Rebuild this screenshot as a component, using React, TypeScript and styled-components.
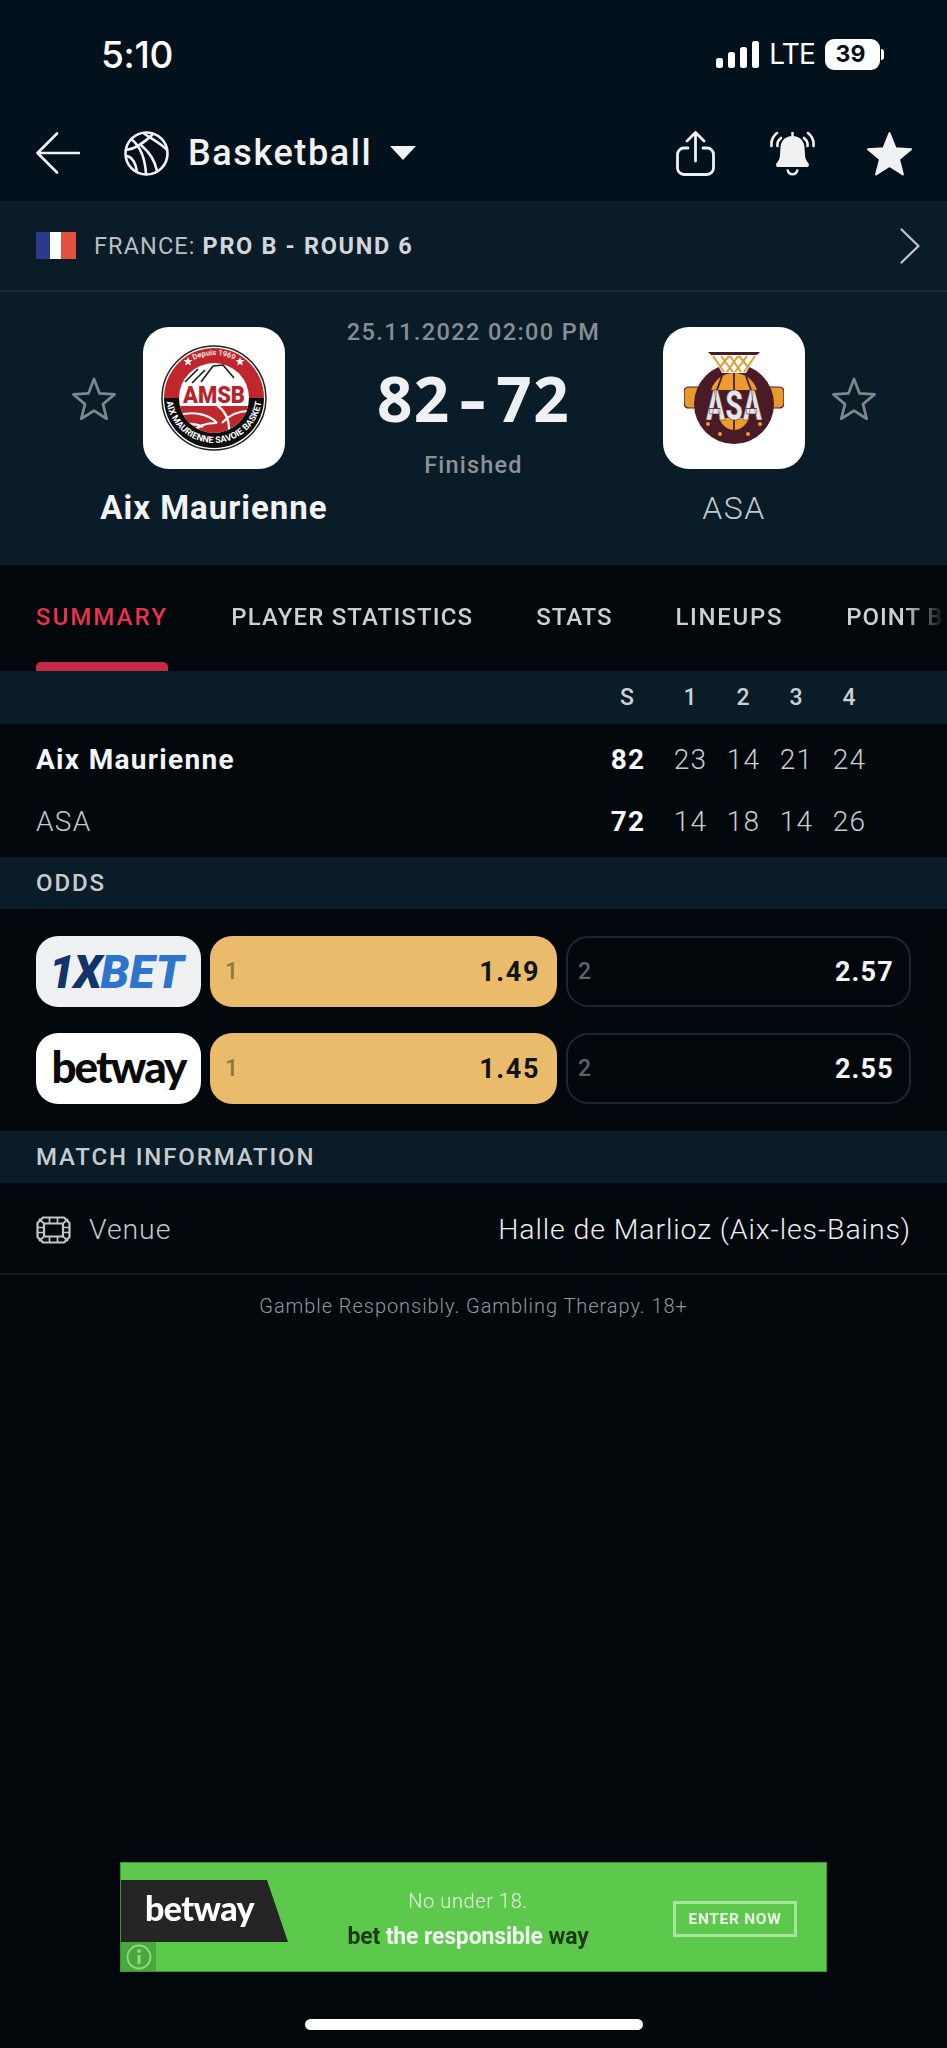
import React from "react";
import styled, { createGlobalStyle } from "styled-components";

const Global = createGlobalStyle`
  html, body { margin: 0; padding: 0; background: #02070c; }
  * { box-sizing: border-box; }
  #root { width: 947px; height: 2048px; overflow: hidden; }
`;

const Page = styled.div`
  width: 947px;
  height: 2048px;
  display: flex;
  flex-direction: column;
  background: #02070c;
  font-family: Roboto, "Liberation Sans", sans-serif;
  color: #f1f2f3;
`;
const TopArea = styled.header`
  height: 201px;
  background: #03111c;
  display: flex;
  flex-direction: column;
`;
const StatusBar = styled.div`
  height: 108px;
  display: flex;
  align-items: center;
  justify-content: space-between;
  padding: 0 63px 0 101px;
`;
const Clock = styled.span`
  font: 500 37px Inter, sans-serif;
  letter-spacing: -0.3px;
  color: #fff;
`;
const StatusRight = styled.div`
  display: flex;
  align-items: center;
  gap: 10px;
`;
const Lte = styled.span`
  font: 400 28px Inter, sans-serif;
  color: #fff;
  letter-spacing: -0.8px;
`;
const Battery = styled.span`
  width: 55px;
  height: 31px;
  border-radius: 9px;
  background: #fff;
  color: #03111c;
  font: 700 23px/31px Inter, sans-serif;
  text-align: center;
  padding-right: 4px;
  display: block;
`;
const BatteryNub = styled.span`
  width: 3px;
  height: 11px;
  background: #fff;
  border-radius: 0 3px 3px 0;
  margin-left: -9px;
`;
const NavBar = styled.nav`
  flex: 1;
  display: flex;
  align-items: center;
  padding: 0 35px 3px 36px;
`;
const NavBack = styled.span`
  display: flex;
  margin-right: 44px;
`;
const NavTitle = styled.span`
  font-size: 36px;
  font-weight: 500;
  letter-spacing: 1.6px;
  margin: 0 18px 0 19px;
`;
const NavActions = styled.div`
  margin-left: auto;
  display: flex;
  align-items: center;
  gap: 55px;
`;
const NavStar = styled.span`
  display: flex;
  margin-left: -3px;
`;
const LeagueBar = styled.div`
  height: 91px;
  background: #0a1c28;
  border-bottom: 2px solid #162a37;
  display: flex;
  align-items: center;
  padding: 0 27px 0 36px;
  font-size: 23.5px;
  letter-spacing: 1.1px;
  color: #b9bec2;
`;
const Flag = styled.span`
  width: 40px;
  height: 27px;
  margin-right: 18px;
  background: linear-gradient(90deg, #2c3a8e 0 36%, #fff 36% 62%, #e2513f 62%);
`;
const LeagueStrong = styled.b`
  font-weight: 700;
  color: #d3d6d9;
  margin-left: 7px;
  letter-spacing: 1.65px;
`;
const ChevronWrap = styled.span`
  margin-left: auto;
  display: flex;
`;
const MatchPanel = styled.section`
  height: 273px;
  background: #0a1c28;
  padding: 35px 0 0 72px;
  display: grid;
  grid-template-columns: 284px 236px 284px;
  align-items: start;
`;
const Team = styled.div`
  display: grid;
  grid-template-columns: 44px 1fr 44px;
  justify-items: center;
  align-items: center;
  row-gap: 21px;
`;
const TeamLogo = styled.div`
  grid-column: 2;
  width: 142px;
  height: 142px;
  border-radius: 26px;
  background: #fff;
  display: flex;
  align-items: center;
  justify-content: center;
`;
const TeamName = styled.div<{ $bold?: boolean }>`
  grid-column: 1 / -1;
  font-size: ${(p) => (p.$bold ? "33px" : "32px")};
  line-height: 36px;
  letter-spacing: ${(p) => (p.$bold ? "1px" : "1.5px")};
  font-weight: ${(p) => (p.$bold ? 700 : 300)};
  color: ${(p) => (p.$bold ? "#f2f3f4" : "#c3c7ca")};
`;
const Center = styled.div`
  margin-top: -10px;
  margin-left: -1px;
  display: flex;
  flex-direction: column;
  align-items: center;
`;
const DateText = styled.div`
  font-size: 23.5px;
  line-height: 30px;
  font-weight: 500;
  letter-spacing: 1.4px;
  color: #878e93;
  white-space: nowrap;
`;
const Score = styled.div`
  font-family: "Noto Sans", Roboto, sans-serif;
  font-size: 62px;
  line-height: 72px;
  font-weight: 700;
  letter-spacing: 1.5px;
  color: #eff0f1;
  margin-top: 15px;
  display: flex;
  gap: 12px;
`;
const ScoreDash = styled.span`
  display: block;
  transform: scaleX(1.35);
`;
const Status = styled.div`
  font-size: 23.5px;
  line-height: 30px;
  font-weight: 500;
  letter-spacing: 1.2px;
  color: #8c9296;
  margin-top: 16px;
`;
const Tabs = styled.div`
  height: 106px;
  padding: 0 0 0 36px;
  display: flex;
  gap: 63px;
  overflow: hidden;
  -webkit-mask-image: linear-gradient(90deg, #000 905px, transparent 945px);
  mask-image: linear-gradient(90deg, #000 905px, transparent 945px);
`;
const Tab = styled.div<{ $active?: boolean; $spacing: number }>`
  height: 106px;
  padding-top: 37px;
  display: flex;
  flex-direction: column;
  justify-content: space-between;
  font-size: 24px;
  line-height: 30px;
  font-weight: 500;
  letter-spacing: ${(p) => p.$spacing}px;
  white-space: nowrap;
  flex: none;
  color: ${(p) => (p.$active ? "#ee2f50" : "#ccd0d3")};
`;
const TabLine = styled.div<{ $active?: boolean }>`
  height: 9px;
  border-radius: 5px 5px 0 0;
  background: ${(p) => (p.$active ? "#c42a45" : "transparent")};
`;
const ScoreHead = styled.div`
  height: 53px;
  background: #0a1c28;
  display: grid;
  grid-template-columns: 1fr 63px repeat(4, 53px);
  padding: 0 71px 0 36px;
  align-items: center;
  font-size: 23px;
  font-weight: 500;
  color: #ccd0d3;
  letter-spacing: 1px;
`;
const ScoreRow = styled.div`
  height: 62px;
  display: grid;
  grid-template-columns: 1fr 63px repeat(4, 53px);
  padding: 0 71px 0 36px;
  align-items: center;
  font-size: 28px;
  letter-spacing: 1.3px;
  font-weight: 300;
  color: #c9cdd0;
`;
const ScoreRows = styled.div`
  height: 133px;
  padding-top: 4px;
`;
const HeadCell = styled.span<{ $main?: boolean }>`
  text-align: center;
  padding-right: ${(p) => (p.$main ? "10px" : "0")};
`;
const RowName = styled.span<{ $bold?: boolean }>`
  font-weight: ${(p) => (p.$bold ? 700 : 300)};
  color: ${(p) => (p.$bold ? "#f4f5f6" : "#c3c7ca")};
`;
const Cell = styled.span<{ $main?: boolean }>`
  text-align: center;
  padding-right: ${(p) => (p.$main ? "9px" : "0")};
  font-weight: ${(p) => (p.$main ? 700 : 300)};
  color: ${(p) => (p.$main ? "#f6f7f8" : "#c9cdd0")};
`;
const SectionHead = styled.div`
  height: 52px;
  background: #0a1c28;
  display: flex;
  align-items: center;
  padding-left: 36px;
  font-size: 24px;
  font-weight: 500;
  letter-spacing: 1.85px;
  color: #c7cbce;
`;
const OddsList = styled.div`
  height: 222px;
  padding: 27px 36px 0;
  display: flex;
  flex-direction: column;
  gap: 26px;
`;
const OddsRow = styled.div`
  height: 71px;
  display: grid;
  grid-template-columns: 165px 347px 345px;
  column-gap: 9px;
`;
const Bookmaker = styled.div<{ $tint?: boolean }>`
  border-radius: 22px;
  background: ${(p) => (p.$tint ? "#eff0f2" : "#fff")};
  display: flex;
  align-items: center;
  justify-content: center;
`;
const OneXLogo = styled.span`
  font: italic 900 46px/1 Roboto, sans-serif;
  letter-spacing: 0.4px;
  color: #2d74cb;
  margin-left: -4px;
`;
const OneXDark = styled.span`
  color: #123468;
  letter-spacing: -1.5px;
`;
const BetwayLogo = styled.span`
  font: 900 44px/1 Lato, sans-serif;
  letter-spacing: -1.9px;
  color: #0a0a0a;
  margin-top: -6px;
`;
const Odd = styled.div<{ $on?: boolean }>`
  border-radius: 22px;
  background: ${(p) => (p.$on ? "#e9bb6a" : "transparent")};
  border: ${(p) => (p.$on ? "none" : "2px solid #1a2833")};
  display: flex;
  align-items: center;
  justify-content: space-between;
  padding: ${(p) => (p.$on ? "0 17px 0 15px" : "0 15px 0 10px")};
  font-size: 27px;
`;
const OddLabel = styled.span<{ $on?: boolean }>`
  font-size: 23px;
  font-weight: 500;
  color: ${(p) => (p.$on ? "#8d7546" : "#5c6368")};
`;
const OddValue = styled.span<{ $on?: boolean }>`
  font-weight: 700;
  letter-spacing: ${(p) => (p.$on ? "1.6px" : "1.2px")};
  color: ${(p) => (p.$on ? "#0e151b" : "#f6f7f8")};
`;
const InfoRow = styled.div`
  height: 92px;
  border-bottom: 2px solid #141c23;
  padding: 3px 36px 0;
  display: flex;
  align-items: center;
  font-size: 28.5px;
  font-weight: 300;
  letter-spacing: 0.9px;
`;
const InfoLabel = styled.span`
  color: #c3c7ca;
  margin-left: 18px;
`;
const InfoValue = styled.span`
  margin-left: auto;
  color: #eceeef;
`;
const Footer = styled.div`
  text-align: center;
  font-size: 20px;
  line-height: 24px;
  letter-spacing: 0.95px;
  font-weight: 300;
  color: #92979b;
  padding-top: 19px;
`;
const Ad = styled.aside`
  margin: auto 120px 0 120px;
  height: 110px;
  width: 707px;
  background: #5cc94c;
  border: 1px solid #3f9435;
  display: grid;
  grid-template-columns: 167px 1fr 124px;
  color: #e9f8e5;
  overflow: hidden;
  filter: blur(0.5px);
`;
const AdBrandCol = styled.div`
  display: flex;
  flex-direction: column;
  padding-top: 17px;
`;
const AdBrand = styled.div`
  height: 62px;
  width: 167px;
  background: #252525;
  clip-path: polygon(0 0, 146px 0, 100% 100%, 0 100%);
  font: 900 34px/56px Lato, sans-serif;
  letter-spacing: -0.6px;
  color: #fff;
  padding-left: 24px;
`;
const AdInfo = styled.div`
  width: 35px;
  flex: 1;
  background: #4aa73e;
  display: flex;
  align-items: center;
  justify-content: center;
`;
const AdCenter = styled.div`
  text-align: center;
  padding: 26px 54px 0 0;
`;
const AdLine = styled.div`
  font-size: 20px;
  line-height: 24px;
  font-weight: 300;
  letter-spacing: 0.6px;
`;
const AdTag = styled.div`
  font-size: 23px;
  line-height: 28px;
  font-weight: 700;
  margin-top: 10px;
  color: #f2fbef;
  white-space: nowrap;
  letter-spacing: -0.15px;
`;
const AdDark = styled.span`
  color: #1c3a18;
`;
const AdCol = styled.div`
  padding-top: 38px;
  margin-left: -29px;
  margin-right: 29px;
`;
const AdButton = styled.div`
  height: 36px;
  width: 124px;
  border: 3px solid #a7e59c;
  font-size: 15.5px;
  line-height: 30px;
  font-weight: 700;
  letter-spacing: 0.7px;
  text-align: center;
  color: #eef9eb;
  white-space: nowrap;
`;
const HomeArea = styled.div`
  height: 76px;
  padding-top: 47px;
  display: flex;
  justify-content: center;
`;
const HomeBar = styled.div`
  width: 338px;
  height: 11px;
  border-radius: 6px;
  background: #fff;
`;

const Signal = () => (
  <svg width="43" height="27" viewBox="0 0 43 27" fill="#fff">
    <rect x="0" y="17" width="7" height="10" rx="2.5" />
    <rect x="12" y="11" width="7" height="16" rx="2.5" />
    <rect x="24" y="6" width="7" height="21" rx="2.5" />
    <rect x="36" y="0" width="7" height="27" rx="2.5" />
  </svg>
);
const BackArrow = () => (
  <svg width="44" height="42" viewBox="0 0 44 42" fill="none" stroke="#f2f3f4" strokeWidth="2.6" strokeLinecap="round" strokeLinejoin="round">
    <path d="M43 21H2M21 1.5 1.5 21 21 40.5" />
  </svg>
);
const Ball = () => (
  <svg width="45" height="45" viewBox="0 0 45 45" fill="none" stroke="#f2f3f4" strokeWidth="2.6" strokeLinecap="round">
    <circle cx="22.5" cy="22.5" r="21" />
    <path d="M7 8c8 6 14 18 15 35M29 3C22 10 12 18 2 19M20 2.500C28 8 38 13 43 19M3 25c5 1 9 7 10 16M18 15c7 6 13 15 15 25" />
  </svg>
);
const Caret = () => (
  <svg width="26" height="14" viewBox="0 0 26 14" fill="#f2f3f4">
    <path d="M0 0h26L13 14z" />
  </svg>
);
const Share = () => (
  <svg width="39" height="45" viewBox="0 0 39 45" fill="none" stroke="#f0f1f2" strokeWidth="2.8" strokeLinecap="round" strokeLinejoin="round">
    <path d="M19.5 30V2M11 10l8.500-8.500L28 10M12 17H8a6.500 6.500 0 0 0-6.500 6.500V37A6.500 6.500 0 0 0 8 43.500h23a6.500 6.500 0 0 0 6.500-6.500V23.500A6.500 6.500 0 0 0 31 17h-4" />
  </svg>
);
const Bell = () => (
  <svg width="45" height="45" viewBox="0 0 45 45" fill="none">
    <path fill="#f0f1f2" d="M21.300 1h2.400v4h-2.400zM22.500 5C15 5 11 10 10.500 16L10 24C9.700 28 8.500 30 6.800 32C5.500 33.500 6 36 8 36H37C39 36 39.500 33.500 38.200 32C36.500 30 35.300 28 35 24L34.500 16C34 10 30 5 22.500 5Z" />
    <path stroke="#f0f1f2" strokeWidth="2.4" d="M17.500 38.500C18 41.500 20 43.300 22.500 43.300S27 41.500 27.500 38.500" />
    <path stroke="#f0f1f2" strokeWidth="2.600" strokeLinecap="round" d="M7 2C3 5 1 10 1.500 15M11 7C8.500 9 7 12 7.500 15M38 2C42 5 44 10 43.500 15M34 7C36.500 9 38 12 37.500 15" />
  </svg>
);
const StarFull = () => (
  <svg width="45" height="45" viewBox="0 0 45 45" fill="#f0f1f2" stroke="#f0f1f2" strokeWidth="2" strokeLinejoin="round">
    <path d="M22.500 2l6 15.200 15.500 1.100-12 10 3.900 15.200-13.400-8.500-13.400 8.500L13 28.300 1 18.300l15.500-1.100z" />
  </svg>
);
const Chevron = () => (
  <svg width="20" height="36" viewBox="0 0 20 36" fill="none" stroke="#c3c7ca" strokeWidth="2.2" strokeLinecap="round" strokeLinejoin="round">
    <path d="M1.500 1.500 18.500 18 1.500 34.500" />
  </svg>
);
const StarOutline = () => (
  <svg width="44" height="44" viewBox="0 0 45 45" fill="none" stroke="#7f878c" strokeWidth="2.800" strokeLinejoin="round">
    <path d="M22.500 3l5.700 14.800 15.300 1.100-11.800 9.900 3.800 14.900-13-8.300-13 8.300 3.800-14.900L1.500 18.900l15.300-1.100z" />
  </svg>
);
const Stadium = () => (
  <svg width="35" height="28" viewBox="0 0 35 28" fill="none" stroke="#c3c7ca" strokeWidth="2.200" strokeLinejoin="round">
    <path d="M7 1.500h21l5.500 5.500v14L28 26.500H7L1.500 21V7z" />
    <rect x="8" y="7.500" width="19" height="13" rx="1.500" />
    <path d="M3 3l5 4.500M32 3l-5 4.500M3 25l5-4.500M32 25l-5-4.500M13.500 1.500v6M21.500 1.500v6M13.500 20.500v6M21.500 20.500v6M1.500 11.500H8M1.500 16.500H8M27 11.500h6.500M27 16.500h6.500" strokeWidth="1.700" />
  </svg>
);
const AmsbLogo = () => (
  <svg width="106" height="106" viewBox="0 0 106 106">
    <defs>
      <path id="ringTop" d="M10 53a43 43 0 0 1 86 0" />
      <path id="ringBottom" d="M5 50a48 48 0 0 0 96 0" />
      <clipPath id="innerDisc"><circle cx="53" cy="53" r="35" /></clipPath>
    </defs>
    <circle cx="53" cy="53" r="52" fill="#fff" stroke="#222" strokeWidth="1.500" />
    <path d="M3 53a50 50 0 0 1 100 0z" fill="#c0272d" />
    <path d="M3 53a50 50 0 0 0 100 0z" fill="#0d0d0d" />
    <circle cx="53" cy="53" r="35" fill="#fff" />
    <text fontFamily="Roboto, sans-serif" fontSize="7.500" fontWeight="500" fill="#fff">
      <textPath href="#ringTop" startOffset="50%" textAnchor="middle">Depuis 1969</textPath>
    </text>
    <text fontFamily="Roboto, sans-serif" fontSize="9" fontWeight="700" fill="#fff">
      <textPath href="#ringBottom" startOffset="50%" textAnchor="middle">AIX MAURIENNE SAVOIE BASKET</textPath>
    </text>
    <path d="M22 38 35 26l6 2 10-7 11-1 10 12 12 8z" fill="#fff" />
    <path d="M24 37 37 24M31 38 44 25M40 37 52 21M52 21l10-1 11 13" fill="none" stroke="#1a1a1a" strokeWidth="1.600" />
    <path d="m27 12 1.300 3 3.200.2-2.500 2 .8 3.200-2.800-1.700-2.800 1.700.8-3.200-2.500-2 3.200-.2z" fill="#fff" />
    <path d="m79 12 1.300 3 3.200.2-2.500 2 .8 3.200-2.800-1.700-2.800 1.700.8-3.200-2.500-2 3.200-.2z" fill="#fff" />
    <text x="53" y="58" textAnchor="middle" fontFamily="Roboto, sans-serif" fontWeight="900" fontSize="24" fill="#b8242a" textLength="62" lengthAdjust="spacingAndGlyphs">AMSB</text>
    <g clipPath="url(#innerDisc)">
      <path d="M18 61h70v30H18z" fill="#c0272d" />
      <path d="M18 70c14-4 30-1 38 8M56 60c8 6 13 15 12 28M88 66c-10 0-20 4-27 12M30 88c7-7 14-10 26-10M18 80c9-2 18-1 24 2" stroke="#fff" strokeWidth="2.200" fill="none" />
    </g>
  </svg>
);
const AsaLogo = () => (
  <svg width="100" height="92" viewBox="0 0 100 92">
    <path d="M0 40c0-3 2-5 5-5h11v21H5c-3 0-5-2-5-5zM100 40c0-3-2-5-5-5H84v21h11c3 0 5-2 5-5z" fill="#e69a2c" stroke="#4a1a26" strokeWidth="1.200" />
    <circle cx="50" cy="52" r="40" fill="#4a1a26" />
    <path d="M24 0h52l-3 3H27z" fill="#4a1a26" />
    <path d="M28 3h44L62 21H38z" fill="#fff" />
    <path d="M29 4l11 16M37 4l12 16M46 4l11 16M55 4l9 11M71 4L60 20M63 4L51 20M54 4 43 20M45 4 36 15" stroke="#e39a30" strokeWidth="2" fill="none" />
    <path d="M27 38c3-10 12-17 23-17s20 7 23 17z" fill="#eb9c2c" />
    <path d="M50 21v17M38 24l-5 14M62 24l5 14" stroke="#4a1a26" strokeWidth="1.800" />
    <path d="M35 66h30c-3 8-9 12-15 12s-12-4-15-12z" fill="#eb9c2c" />
    <path d="M50 66v12" stroke="#4a1a26" strokeWidth="1.800" />
    <circle cx="24" cy="72" r="2" fill="#eb9c2c" />
    <circle cx="76" cy="72" r="2" fill="#eb9c2c" />
    <circle cx="36" cy="82" r="2" fill="#eb9c2c" />
    <circle cx="64" cy="82" r="2" fill="#eb9c2c" />
    <text x="50" y="68" textAnchor="middle" fontFamily="Roboto, sans-serif" fontWeight="900" fontSize="42" fill="#e6e6e8" stroke="#4a1a26" strokeWidth=".6" textLength="56" lengthAdjust="spacingAndGlyphs">ASA</text>
  </svg>
);
const InfoIcon = () => (
  <svg width="26" height="26" viewBox="0 0 26 26" fill="none" stroke="#8edc80" strokeWidth="1.800">
    <circle cx="13" cy="13" r="11.500" />
    <path d="M13 11v9" strokeWidth="3" />
    <circle cx="13" cy="7" r="1" />
  </svg>
);

const tabs = [
  { label: "SUMMARY", spacing: 2.1 },
  { label: "PLAYER STATISTICS", spacing: 1.15 },
  { label: "STATS", spacing: 0.95 },
  { label: "LINEUPS", spacing: 1.7 },
  { label: "POINT BY POINT", spacing: 0.95 },
];

const rows = [
  { name: "Aix Maurienne", bold: true, vals: ["82", "23", "14", "21", "24"] },
  { name: "ASA", bold: false, vals: ["72", "14", "18", "14", "26"] },
];

export default function App() {
  return (
    <Page>
      <Global />
      <TopArea>
        <StatusBar>
          <Clock>5:10</Clock>
          <StatusRight>
            <Signal />
            <Lte>LTE</Lte>
            <Battery>39</Battery>
            <BatteryNub />
          </StatusRight>
        </StatusBar>
        <NavBar>
          <NavBack><BackArrow /></NavBack>
          <Ball />
          <NavTitle>Basketball</NavTitle>
          <Caret />
          <NavActions>
            <Share />
            <Bell />
            <NavStar><StarFull /></NavStar>
          </NavActions>
        </NavBar>
      </TopArea>
      <LeagueBar>
        <Flag />
        FRANCE:<LeagueStrong>PRO B - ROUND 6</LeagueStrong>
        <ChevronWrap><Chevron /></ChevronWrap>
      </LeagueBar>
      <MatchPanel>
        <Team>
          <StarOutline />
          <TeamLogo><AmsbLogo /></TeamLogo>
          <TeamName $bold>Aix Maurienne</TeamName>
        </Team>
        <Center>
          <DateText>25.11.2022 02:00 PM</DateText>
          <Score><span>82</span><ScoreDash>-</ScoreDash><span>72</span></Score>
          <Status>Finished</Status>
        </Center>
        <Team>
          <TeamLogo><AsaLogo /></TeamLogo>
          <StarOutline />
          <TeamName>ASA</TeamName>
        </Team>
      </MatchPanel>
      <Tabs>
        {tabs.map((t, i) => (
          <Tab key={t.label} $active={i === 0} $spacing={t.spacing}>
            {t.label}
            <TabLine $active={i === 0} />
          </Tab>
        ))}
      </Tabs>
      <ScoreHead>
        <span />
        <HeadCell $main>S</HeadCell>
        <HeadCell>1</HeadCell>
        <HeadCell>2</HeadCell>
        <HeadCell>3</HeadCell>
        <HeadCell>4</HeadCell>
      </ScoreHead>
      <ScoreRows>
        {rows.map((r) => (
          <ScoreRow key={r.name}>
            <RowName $bold={r.bold}>{r.name}</RowName>
            {r.vals.map((v, i) => (
              <Cell key={i} $main={i === 0}>{v}</Cell>
            ))}
          </ScoreRow>
        ))}
      </ScoreRows>
      <SectionHead>ODDS</SectionHead>
      <OddsList>
        <OddsRow>
          <Bookmaker $tint><OneXLogo><OneXDark>1X</OneXDark>BET</OneXLogo></Bookmaker>
          <Odd $on><OddLabel $on>1</OddLabel><OddValue $on>1.49</OddValue></Odd>
          <Odd><OddLabel>2</OddLabel><OddValue>2.57</OddValue></Odd>
        </OddsRow>
        <OddsRow>
          <Bookmaker><BetwayLogo>betway</BetwayLogo></Bookmaker>
          <Odd $on><OddLabel $on>1</OddLabel><OddValue $on>1.45</OddValue></Odd>
          <Odd><OddLabel>2</OddLabel><OddValue>2.55</OddValue></Odd>
        </OddsRow>
      </OddsList>
      <SectionHead>MATCH INFORMATION</SectionHead>
      <InfoRow>
        <Stadium />
        <InfoLabel>Venue</InfoLabel>
        <InfoValue>Halle de Marlioz (Aix-les-Bains)</InfoValue>
      </InfoRow>
      <Footer>Gamble Responsibly. Gambling Therapy. 18+</Footer>
      <Ad>
        <AdBrandCol>
          <AdBrand>betway</AdBrand>
          <AdInfo><InfoIcon /></AdInfo>
        </AdBrandCol>
        <AdCenter>
          <AdLine>No under 18.</AdLine>
          <AdTag><AdDark>bet</AdDark> the responsible <AdDark>way</AdDark></AdTag>
        </AdCenter>
        <AdCol><AdButton>ENTER NOW</AdButton></AdCol>
      </Ad>
      <HomeArea><HomeBar /></HomeArea>
    </Page>
  );
}
